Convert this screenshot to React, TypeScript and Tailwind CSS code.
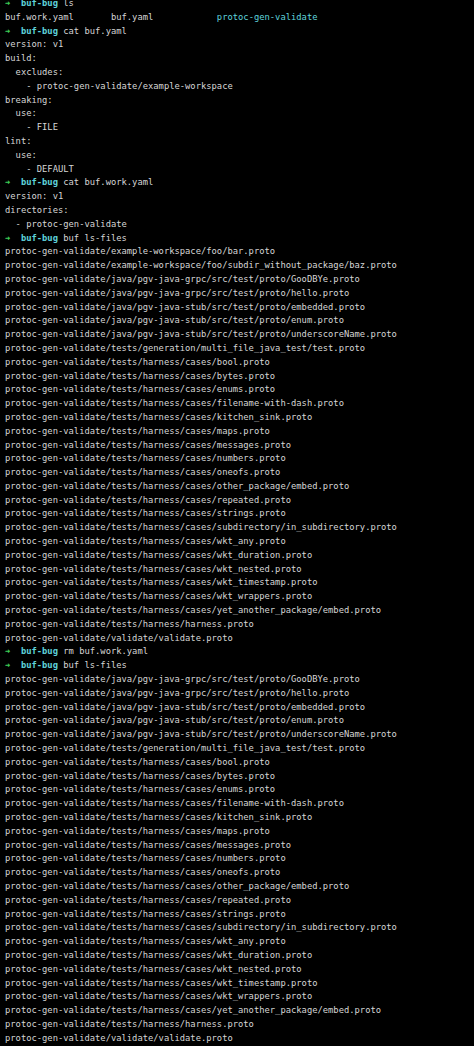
import React from "react";

const P = (cmd: string) => ({ prompt: true, text: cmd });

const harness = [
  "bool",
  "bytes",
  "enums",
  "filename-with-dash",
  "kitchen_sink",
  "maps",
  "messages",
  "numbers",
  "oneofs",
  "other_package/embed",
  "repeated",
  "strings",
  "subdirectory/in_subdirectory",
  "wkt_any",
  "wkt_duration",
  "wkt_nested",
  "wkt_timestamp",
  "wkt_wrappers",
  "yet_another_package/embed",
].map((c) => `protoc-gen-validate/tests/harness/cases/${c}.proto`);

const javaFiles = [
  "protoc-gen-validate/java/pgv-java-grpc/src/test/proto/GooDBYe.proto",
  "protoc-gen-validate/java/pgv-java-grpc/src/test/proto/hello.proto",
  "protoc-gen-validate/java/pgv-java-stub/src/test/proto/embedded.proto",
  "protoc-gen-validate/java/pgv-java-stub/src/test/proto/enum.proto",
  "protoc-gen-validate/java/pgv-java-stub/src/test/proto/underscoreName.proto",
  "protoc-gen-validate/tests/generation/multi_file_java_test/test.proto",
  ...harness,
  "protoc-gen-validate/tests/harness/harness.proto",
  "protoc-gen-validate/validate/validate.proto",
];

type Line = string | { prompt: boolean; text: string } | { ls: true };

const lines: Line[] = [
  P("ls"),
  { ls: true },
  P("cat buf.yaml"),
  "version: v1",
  "build:",
  "  excludes:",
  "    - protoc-gen-validate/example-workspace",
  "breaking:",
  "  use:",
  "    - FILE",
  "lint:",
  "  use:",
  "    - DEFAULT",
  P("cat buf.work.yaml"),
  "version: v1",
  "directories:",
  "  - protoc-gen-validate",
  P("buf ls-files"),
  "protoc-gen-validate/example-workspace/foo/bar.proto",
  "protoc-gen-validate/example-workspace/foo/subdir_without_package/baz.proto",
  ...javaFiles,
  P("rm buf.work.yaml"),
  P("buf ls-files"),
  ...javaFiles,
];

export default function App() {
  return (
    <div
      className="w-[474px] h-[1046px] overflow-hidden bg-black text-[#d6d6d6] text-[8.8px] leading-[13.79px] pl-[5px]"
      style={{ fontFamily: '"DejaVu Sans Mono", "Liberation Mono", monospace' }}
    >
      <div className="mt-[-3px] whitespace-pre">
        {lines.map((l, i) => {
          if (typeof l === "string") return <div key={i}>{l || " "}</div>;
          if ("ls" in l)
            return (
              <div key={i}>
                {"buf.work.yaml       buf.yaml            "}
                <span className="text-[#5fd3dc]">protoc-gen-validate</span>
              </div>
            );
          return (
            <div key={i}>
              <span className="text-[#3fd45a] font-bold">➜</span>
              {"  "}
              <span className="text-[#5fd3dc] font-bold">buf-bug</span>
              {" " + l.text}
            </div>
          );
        })}
      </div>
    </div>
  );
}
